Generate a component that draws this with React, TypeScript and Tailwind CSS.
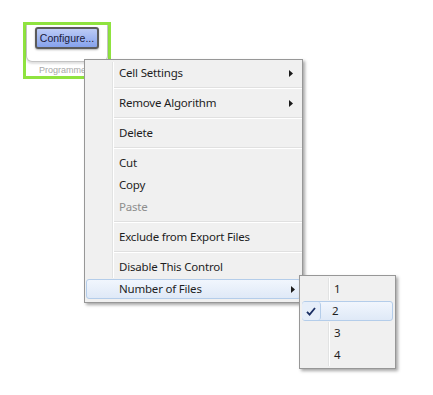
import React from "react";

const Arrow = () => (
  <svg width="4" height="7" viewBox="0 0 4 7" className="block">
    <path d="M0 0 L4 3.5 L0 7 Z" fill="#1a1a1a" />
  </svg>
);

type Item =
  | { kind: "item"; label: string; arrow?: boolean; disabled?: boolean; hot?: boolean }
  | { kind: "sep" };

const items: Item[] = [
  { kind: "item", label: "Cell Settings", arrow: true },
  { kind: "sep" },
  { kind: "item", label: "Remove Algorithm", arrow: true },
  { kind: "sep" },
  { kind: "item", label: "Delete" },
  { kind: "sep" },
  { kind: "item", label: "Cut" },
  { kind: "item", label: "Copy" },
  { kind: "item", label: "Paste", disabled: true },
  { kind: "sep" },
  { kind: "item", label: "Exclude from Export Files" },
  { kind: "sep" },
  { kind: "item", label: "Disable This Control" },
  { kind: "item", label: "Number of Files", arrow: true, hot: true },
];

function MenuRow({ it }: { it: Item }) {
  if (it.kind === "sep") {
    return (
      <div className="flex h-[8px]">
        <div className="w-[28px] shrink-0 border-r border-r-[#e2e3e3]" />
        <div className="w-px bg-white" />
        <div className="flex-1 flex flex-col justify-center">
          <div className="h-px bg-[#e0e0e0]" />
          <div className="h-px bg-white" />
        </div>
      </div>
    );
  }
  if (it.hot) {
    return (
      <div className="h-[22px] px-[1px] py-[1px]">
        <div className="h-full flex items-center rounded-[3px] border border-[#b4cdea] bg-gradient-to-b from-[#f1f6fd] to-[#dfe9f7]">
          <div className="w-[32px] shrink-0" />
          <span className="flex-1 text-[#1e1e1e]">{it.label}</span>
          <div className="pr-[5px]">
            <Arrow />
          </div>
        </div>
      </div>
    );
  }
  return (
    <div className="flex h-[22px]">
      <div className="w-[28px] shrink-0 border-r border-r-[#e2e3e3]" />
      <div className="w-px bg-white" />
      <div className="flex-1 flex items-center pl-[5px] pr-[9px]">
        <span className={"flex-1 " + (it.disabled ? "text-[#8d8d8d]" : "text-[#1e1e1e]")}>
          {it.label}
        </span>
        {it.arrow && <Arrow />}
      </div>
    </div>
  );
}

function SubRow({ n, checked }: { n: string; checked?: boolean }) {
  if (checked) {
    return (
      <div className="h-[22px] px-[2px] py-[1px]">
        <div className="h-full flex items-center rounded-[3px] border border-[#b4cdea] bg-gradient-to-b from-[#f1f6fd] to-[#dfe9f7]">
          <div className="w-[19px] h-full shrink-0 flex items-center justify-center rounded-[3px] border-r border-r-[#b4cdea] bg-[#e6eef9] -ml-px">
            <svg width="10" height="9" viewBox="0 0 10 9">
              <path d="M1 4.8 L3.6 7.6 L9 1" fill="none" stroke="#1b2f63" strokeWidth="1.8" />
            </svg>
          </div>
          <div className="w-[11px] shrink-0" />
          <span className="text-[#1e1e1e]">{n}</span>
        </div>
      </div>
    );
  }
  return (
    <div className="flex h-[22px]">
      <div className="w-[29px] shrink-0 border-r border-r-[#e2e3e3]" />
      <div className="w-px bg-white" />
      <div className="flex-1 flex items-center pl-[4px] text-[#1e1e1e]">{n}</div>
    </div>
  );
}

export default function App() {
  return (
    <div className="relative w-[433px] h-[395px] bg-white overflow-hidden font-['Noto_Sans',sans-serif]">
      {/* widget */}
      <div className="ml-[23px] mt-[22px] w-[88px] h-[57px] border-[3px] border-[#8fe33f] flex flex-col">
        <div className="h-[40px] rounded-[6px] rounded-t-none border border-t-0 border-[#c4c4c4] bg-white shadow-[0_2px_2px_rgba(0,0,0,0.12)] pt-[2px] pl-[8px]">
          <div className="w-[64px] h-[22px] rounded-[3px] border-2 border-[#5b5b5b] bg-gradient-to-b from-[#bccbf5] to-[#86a2ec] shadow-[0_1px_2px_rgba(0,0,0,0.3)] flex items-center justify-center text-[10.5px] leading-none text-[#1a1a3a] font-['Liberation_Sans',sans-serif]">
            Configure...
          </div>
        </div>
        <div className="pl-[13px] pt-[2px] text-[9px] leading-[12px] text-[#a8a8a8] font-['Liberation_Sans',sans-serif] whitespace-nowrap">
          Programmed
        </div>
      </div>

      {/* main context menu */}
      <div className="absolute left-[84px] top-[59px] w-[219px] border border-[#979797] bg-[#f0f0f0] py-[2px] text-[11.5px] tracking-[-0.2px] leading-none shadow-[2px_2px_3px_rgba(0,0,0,0.35)]">
        {items.map((it, i) => (
          <MenuRow key={i} it={it} />
        ))}
      </div>

      {/* submenu */}
      <div className="absolute left-[299px] top-[275px] w-[97px] border border-[#979797] bg-[#f0f0f0] py-[2px] text-[11.5px] leading-none shadow-[2px_2px_3px_rgba(0,0,0,0.35)]">
        <SubRow n="1" />
        <SubRow n="2" checked />
        <SubRow n="3" />
        <SubRow n="4" />
      </div>
    </div>
  );
}
